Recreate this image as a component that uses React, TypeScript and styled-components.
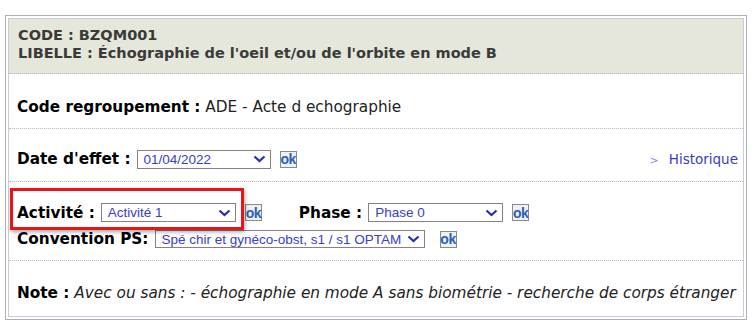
import styled, { createGlobalStyle } from "styled-components";

const GlobalStyle = createGlobalStyle`
  body {
    margin: 0;
    background: #ffffff;
    font-family: "DejaVu Sans", Verdana, sans-serif;
  }
`;

const Page = () => {
  return (
    <>
      <GlobalStyle />
      <Wrap>
        <Frame>
          <Inner>
            <Header>
              <div>CODE : BZQM001</div>
              <div>LIBELLE : Échographie de l'oeil et/ou de l'orbite en mode B</div>
            </Header>
            <Row $h={55} $pt={12}>
              <Line>
                <Label>Code regroupement :</Label>
                <Value>&nbsp;ADE - Acte d echographie</Value>
              </Line>
            </Row>
            <Row $h={53}>
              <Line>
                <Label>Date d'effet :</Label>
                <Select $w={134} $ml={6}>
                  <span>01/04/2022</span>
                  <Chevron />
                </Select>
                <OkBtn $ml={9}>ok</OkBtn>
                <Spacer />
                <HistoLink>
                  <Arrow>&gt;</Arrow>Historique
                </HistoLink>
              </Line>
            </Row>
            <Row $h={79} $pos>
              <Stack>
                <Line>
                  <Label>Activité :</Label>
                  <Select $w={135} $ml={6}>
                    <span>Activité 1</span>
                    <Chevron />
                  </Select>
                  <OkBtn $ml={9}>ok</OkBtn>
                  <Label $ml={37}>Phase :</Label>
                  <Select $w={135} $ml={6}>
                    <span>Phase 0</span>
                    <Chevron />
                  </Select>
                  <OkBtn $ml={9}>ok</OkBtn>
                </Line>
                <Line>
                  <Label>Convention PS:</Label>
                  <Select $w={270} $h={18} $ml={6}>
                    <Clip>Spé chir et gynéco-obst, s1 / s1 OPTAM</Clip>
                    <Chevron />
                  </Select>
                  <OkBtn $ml={15}>ok</OkBtn>
                </Line>
              </Stack>
              <Highlight />
            </Row>
            <Row $h={55} $last>
              <Line>
                <Label>Note :</Label>
                <Note>&nbsp;Avec ou sans : - échographie en mode A sans biométrie - recherche de corps étranger</Note>
              </Line>
            </Row>
          </Inner>
        </Frame>
        <NextFrame />
      </Wrap>
    </>
  );
};

const Chevron = () => (
  <svg width="13" height="8" viewBox="0 0 13 8">
    <path d="M1.5 1.5 L6.5 6 L11.5 1.5" fill="none" stroke="#2b2bb0" strokeWidth="2.2" />
  </svg>
);

export default Page;

const Wrap = styled.div`
  padding: 15px 9px 0 5px;
  width: 742px;
`;

const Frame = styled.div`
  border: 1px solid #a9aebb;
  padding: 2px;
`;

const NextFrame = styled.div`
  margin-top: 2px;
  border: 1px solid #a9aebb;
  border-bottom: none;
  padding: 2px 2px 0;
  height: 10px;
  &::after {
    content: "";
    display: block;
    height: 100%;
    border: 1px solid #c9ccd4;
    border-bottom: none;
    background: #e5e7db;
  }
`;

const Inner = styled.div`
  border: 1px solid #c9ccd4;
`;

const Header = styled.div`
  background: #e5e7db;
  height: 55px;
  box-sizing: border-box;
  padding: 7px 9px 0;
  font-size: 14.5px;
  font-weight: bold;
  line-height: 18px;
  color: #3a3a3a;
  border-bottom: 1px dotted #b9b9b9;
`;

const Row = styled.div<{ $h: number; $pt?: number; $pos?: boolean; $last?: boolean }>`
  position: ${(p) => (p.$pos ? "relative" : "static")};
  height: ${(p) => p.$h}px;
  box-sizing: border-box;
  display: flex;
  align-items: center;
  padding: ${(p) => p.$pt ?? 8}px 8px 0 8px;
  border-bottom: ${(p) => (p.$last ? "none" : "1px dotted #b9b9b9")};
`;

const Stack = styled.div`
  display: flex;
  flex-direction: column;
  gap: 8px;
  margin-top: 1px;
  width: 100%;
`;

const Line = styled.div`
  display: flex;
  align-items: center;
  width: 100%;
  font-size: 15.3px;
  color: #111;
  white-space: nowrap;
`;

const Label = styled.span<{ $ml?: number }>`
  font-weight: bold;
  color: #000;
  margin-left: ${(p) => p.$ml ?? 0}px;
`;

const Value = styled.span`
  color: #222;
`;

const Note = styled.span`
  font-style: italic;
  color: #222;
`;

const Select = styled.div<{ $w: number; $h?: number; $ml?: number }>`
  width: ${(p) => p.$w}px;
  height: ${(p) => p.$h ?? 19}px;
  margin-left: ${(p) => p.$ml ?? 0}px;
  box-sizing: border-box;
  border: 1px solid #8a8080;
  display: flex;
  align-items: center;
  justify-content: space-between;
  padding: 0 4px 0 6px;
  font-family: "Liberation Sans", Arial, sans-serif;
  font-size: 13.5px;
  color: #3b3bd0;
  background: #fff;
  svg {
    flex-shrink: 0;
    margin-left: 2px;
  }
`;

const Clip = styled.span`
  overflow: hidden;
  white-space: nowrap;
  flex: 1;
`;

const OkBtn = styled.span<{ $ml?: number }>`
  margin-left: ${(p) => p.$ml ?? 0}px;
  width: 17px;
  height: 17px;
  box-sizing: border-box;
  border: 1px solid #8a8a8a;
  background: #eef0f4;
  display: flex;
  align-items: center;
  justify-content: center;
  font-family: "Liberation Sans", Arial, sans-serif;
  font-weight: bold;
  font-size: 14px;
  color: #2a62b8;
  letter-spacing: -0.5px;
`;

const Spacer = styled.div`
  flex: 1;
`;

const HistoLink = styled.span`
  color: #3a3ac8;
  font-size: 13.5px;
  margin-right: -3px;
`;

const Arrow = styled.span`
  color: #8888dd;
  font-size: 11px;
  margin-right: 10px;
`;

const Highlight = styled.div`
  position: absolute;
  left: 1px;
  top: 6px;
  width: 234px;
  height: 42px;
  box-sizing: border-box;
  border: 3px solid #e8141c;
  box-shadow: 1px 2px 4px rgba(0, 0, 0, 0.35);
  pointer-events: none;
`;
